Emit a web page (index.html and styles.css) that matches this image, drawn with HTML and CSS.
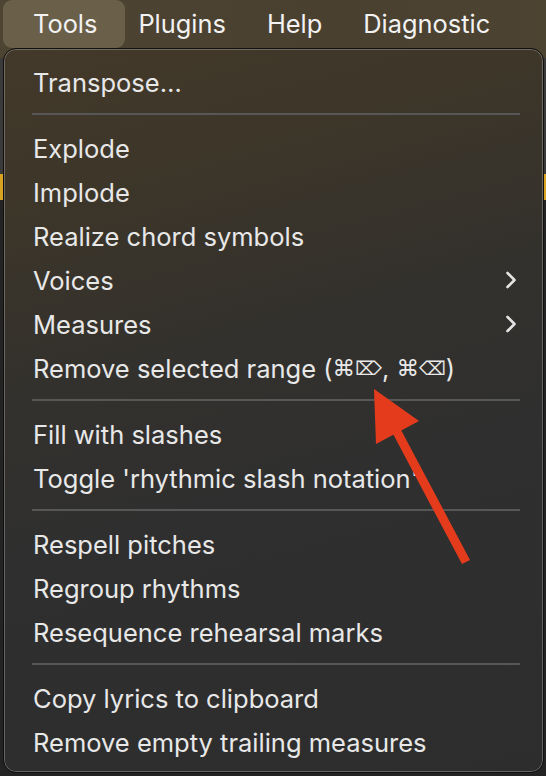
FILE: index.html
```html
<!DOCTYPE html>
<html lang="en">
<head>
<meta charset="utf-8">
<title>Tools menu</title>
<link rel="stylesheet" href="styles.css">
</head>
<body>
<div class="menubar">
  <div class="mb-item active">Tools</div>
  <div class="mb-item">Plugins</div>
  <div class="mb-item">Help</div>
  <div class="mb-item">Diagnostic</div>
</div>
<div class="menu">
  <div class="item">Transpose…</div>
  <div class="sep"></div>
  <div class="item">Explode</div>
  <div class="item">Implode</div>
  <div class="item">Realize chord symbols</div>
  <div class="item sub">Voices
    <svg class="chev" width="12" height="18" viewBox="0 0 12 18"><path d="M2.5 2 L9.5 9 L2.5 16" fill="none" stroke="#e4e4e4" stroke-width="2.6" stroke-linecap="round" stroke-linejoin="round"/></svg>
  </div>
  <div class="item sub">Measures
    <svg class="chev" width="12" height="18" viewBox="0 0 12 18"><path d="M2.5 2 L9.5 9 L2.5 16" fill="none" stroke="#e4e4e4" stroke-width="2.6" stroke-linecap="round" stroke-linejoin="round"/></svg>
  </div>
  <div class="item">Remove selected range (<span class="cmd">⌘</span><span class="key">⌦</span>,&nbsp;<span class="cmd">⌘</span><span class="key">⌫</span>)</div>
  <div class="sep"></div>
  <div class="item">Fill with slashes</div>
  <div class="item">Toggle 'rhythmic slash notation'</div>
  <div class="sep"></div>
  <div class="item">Respell pitches</div>
  <div class="item">Regroup rhythms</div>
  <div class="item">Resequence rehearsal marks</div>
  <div class="sep"></div>
  <div class="item">Copy lyrics to clipboard</div>
  <div class="item">Remove empty trailing measures</div>
</div>
<svg class="arrow" width="546" height="776" viewBox="0 0 546 776">
  <line x1="396" y1="430" x2="466" y2="562" stroke="#e53b1d" stroke-width="9"/>
  <polygon points="374,389 419,421 376,444" fill="#e53b1d"/>
</svg>
</body>
</html>
```

FILE: styles.css
```css
html, body {
  margin: 0;
  padding: 0;
}
body {
  width: 546px;
  height: 776px;
  overflow: hidden;
  position: relative;
  font-family: Inter, "Noto Sans", "DejaVu Sans", sans-serif;
  background:
    linear-gradient(to bottom,
      #4c4330 0px, #4c4330 58px,
      #3a3a3a 58px, #3a3a3a 174px,
      #d7a321 174px, #d7a321 200px,
      #232323 200px, #232323 100%);
}
.menubar {
  height: 48px;
  display: flex;
  align-items: stretch;
  padding-left: 3px;
  background: linear-gradient(to right, #4e4432, #4a4030 60%, #4d4331);
  color: #f2f2f2;
  font-size: 25.4px;
}
.mb-item {
  display: flex;
  align-items: center;
  margin-right: 41px;
  padding-bottom: 2px;
}
.mb-item.active {
  padding: 0 28px 2px 30px;
  margin-right: 13px;
  height: 46px;
  background: #6a5f49;
  border-radius: 9px;
}
.menu {
  margin: 0 2px 0 3px;
  height: 725px;
  box-sizing: border-box;
  border: 1px solid #101010;
  border-radius: 13px;
  box-shadow: inset 0 0 0 1px rgba(255, 255, 255, 0.26);
  background: linear-gradient(165deg, #43392a 0%, #3d3629 18%, #33312d 40%, #2f2f2f 60%, #2d2d2d 100%);
  padding: 11px 0 7px;
  color: #e8e8e8;
  font-size: 25.5px;
}
.item {
  height: 44px;
  display: flex;
  align-items: center;
  padding-left: 29px;
  padding-right: 26px;
  white-space: nowrap;
}
.item.sub {
  justify-content: space-between;
}
.chev {
  display: block;
}
.cmd, .key {
  font-family: "DejaVu Sans", sans-serif;
}
.cmd {
  font-size: 22.5px;
}
.key {
  font-size: 19px;
}
.sep {
  height: 2px;
  margin: 9px 23px 11px 28px;
  background: #575757;
}
.arrow {
  position: absolute;
  left: 0;
  top: 0;
  pointer-events: none;
}
```
